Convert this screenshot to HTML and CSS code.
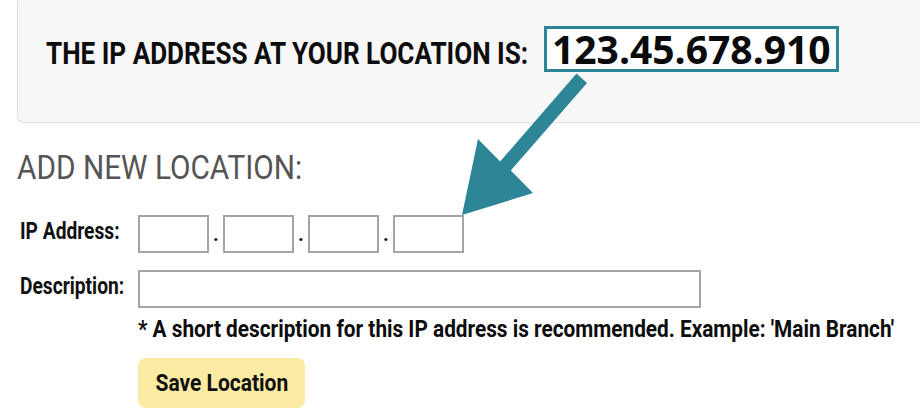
FILE: index.html
```html
<!DOCTYPE html>
<html lang="en">
<head>
<meta charset="utf-8">
<title>Add Location</title>
<link rel="stylesheet" href="styles.css">
</head>
<body>
<div class="page">
  <div class="panel">
    <div class="heading"><span class="cond c-head">THE IP ADDRESS AT YOUR LOCATION IS:</span></div>
    <div class="ipbox">123.45.678.910</div>
  </div>

  <div class="form">
    <h2 class="title"><span class="cond c-title">ADD NEW LOCATION:</span></h2>
    <div class="grid">
      <label class="label"><span class="cond c-label">IP Address:</span></label>
      <div class="octets">
        <input class="octet" type="text">
        <span class="dot">.</span>
        <input class="octet" type="text">
        <span class="dot">.</span>
        <input class="octet" type="text">
        <span class="dot">.</span>
        <input class="octet" type="text">
      </div>

      <label class="label label-desc"><span class="cond c-label">Description:</span></label>
      <input class="desc" type="text">

      <div class="spacer"></div>
      <p class="hint"><span class="cond c-hint">* A short description for this IP address is recommended. Example: 'Main Branch'</span></p>

      <div class="spacer"></div>
      <div><button class="save" type="button"><span class="cond c-btn">Save Location</span></button></div>
    </div>
  </div>

  <svg class="arrow" width="920" height="418" viewBox="0 0 920 418" aria-hidden="true">
    <polygon points="576.5,73.5 587,83 510.8,170.6 533,193 462,215 478,139 500.2,161.4" fill="#2e8595"/>
  </svg>
</div>
</body>
</html>
```

FILE: styles.css
```css
* { box-sizing: border-box; }

html, body {
  margin: 0;
  padding: 0;
  background: #ffffff;
}

body {
  font-family: Roboto, "Liberation Sans", sans-serif;
  color: #111111;
  width: 920px;
  height: 418px;
  overflow: hidden;
}

.page {
  position: relative;
  width: 920px;
  height: 418px;
  overflow: hidden;
}

.cond {
  display: inline-block;
  white-space: nowrap;
  transform-origin: 0 50%;
}

/* ---------- top panel ---------- */
.panel {
  margin-left: 17px;
  height: 123px;
  background: #f7f7f7;
  border: 1px solid #e3e3e3;
  border-top: none;
  border-right: none;
  border-radius: 0 0 0 7px;
  box-shadow: 0 1px 2px rgba(0, 0, 0, 0.05);
  display: flex;
  align-items: baseline;
  padding: 26px 0 0 28px;
}

.heading {
  width: 498px;
  flex: none;
  font-weight: 700;
  font-size: 32px;
  line-height: 40px;
  color: #0d0d0d;
}

.c-head { transform: scaleX(0.815); }

.ipbox {
  flex: none;
  border: 3px solid #2e8595;
  background: #ffffff;
  font-family: "Open Sans", "Noto Sans", sans-serif;
  font-weight: 700;
  font-size: 39px;
  line-height: 40px;
  padding: 0 5px;
  color: #0a0a0a;
}

/* ---------- form ---------- */
.form {
  padding-left: 20px;
}

.title {
  margin: 27px 0 0 -3px;
  font-weight: 400;
  font-size: 34px;
  line-height: 34px;
  color: #555555;
}

.c-title { transform: scaleX(0.876); }

.grid {
  display: grid;
  grid-template-columns: 118px auto;
  justify-content: start;
  align-items: center;
  margin-top: 31px;
}

.label {
  font-weight: 700;
  font-size: 23px;
  line-height: 28px;
  color: #111111;
  align-self: center;
  padding-bottom: 4px;
}

.c-label { transform: scaleX(0.834); }

.octets {
  display: flex;
  align-items: flex-end;
}

.octet {
  width: 71px;
  height: 38px;
  border: 2px solid #a4a4a4;
  background: #ffffff;
  margin: 0;
  padding: 0;
  font: inherit;
}

.dot {
  width: 14px;
  text-align: center;
  font-size: 20px;
  font-weight: 700;
  line-height: 20px;
  padding-bottom: 9px;
  color: #111111;
}

.label-desc {
  margin-top: 17px;
}

.desc {
  margin: 17px 0 0 0;
  width: 563px;
  height: 38px;
  border: 2px solid #a4a4a4;
  background: #ffffff;
  padding: 0;
  font: inherit;
}

.spacer { height: 1px; }

.hint {
  margin: 6px 0 0 0;
  font-weight: 700;
  font-size: 24px;
  line-height: 30px;
  color: #0d0d0d;
}

.c-hint { transform: scaleX(0.866); }

.save {
  margin-top: 14px;
  width: 167px;
  height: 50px;
  background: #fbeba3;
  border: none;
  border-radius: 8px;
  font-family: Roboto, "Liberation Sans", sans-serif;
  font-weight: 700;
  font-size: 24px;
  color: #111111;
  padding: 0;
  display: flex;
  align-items: center;
  justify-content: center;
}

.c-btn {
  transform: scaleX(0.875);
  transform-origin: 50% 50%;
}

/* ---------- arrow overlay ---------- */
.arrow {
  position: absolute;
  left: 0;
  top: 0;
  pointer-events: none;
}
```
